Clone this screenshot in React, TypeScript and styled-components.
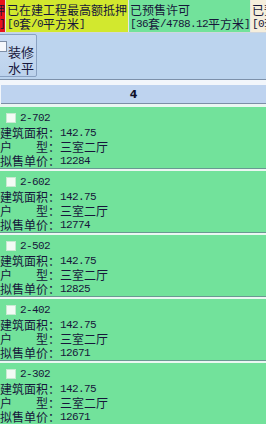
import React from "react";
import styled, { createGlobalStyle } from "styled-components";

const GlobalStyle = createGlobalStyle`
  html, body { margin: 0; padding: 0; }
  body {
    background: #bcd4ee;
    font-family: "Noto Sans CJK SC", "Noto Sans", sans-serif;
    color: #16163a;
    overflow: hidden;
  }
`;

const Page = styled.div`
  width: 266px;
  height: 424px;
  overflow: hidden;
  display: flex;
  flex-direction: column;
`;

const TopBar = styled.div`
  display: flex;
  gap: 1px;
  height: 32px;
  background: #e6e6e6;
  border-bottom: 1px solid #cfd6de;
  overflow: hidden;
  flex: none;
`;

const Segment = styled.div<{ $bg: string; $w?: number; $clip?: boolean }>`
  flex: ${(p) => (p.$w ? `0 0 ${p.$w}px` : "1 1 0")};
  min-width: 0;
  background: ${(p) => p.$bg};
  padding: 3px 0 0 ${(p) => (p.$clip ? 0 : 1)}px;
  box-sizing: border-box;
  white-space: nowrap;
  overflow: hidden;
  display: flex;
  flex-direction: column;
  align-items: ${(p) => (p.$clip ? "flex-end" : "flex-start")};
`;

const TextRow = styled.div`
  height: 14px;
  display: flex;
  align-items: center;
  font-size: 12px;
  line-height: 14px;
  white-space: nowrap;
`;

const Num = styled.span`
  font-family: "Liberation Mono", "DejaVu Sans Mono", monospace;
  font-size: 11px;
  letter-spacing: -0.6px;
  line-height: 14px;
`;

const Toolbar = styled.div`
  height: 46px;
  border-bottom: 1px solid #7d91aa;
  display: flex;
  align-items: flex-start;
  overflow: hidden;
  flex: none;
`;

const ToolButton = styled.div`
  margin-left: -7px;
  margin-top: 1px;
  width: 44px;
  height: 43px;
  box-sizing: border-box;
  border: 1px solid #8aa2c2;
  border-radius: 2px;
  background: linear-gradient(#cadcf2, #bcd2ec);
  padding: 9px 0 0 6px;
  font-size: 13px;
  line-height: 16px;
  display: flex;
  flex-direction: column;
`;

const BtnLine = styled.div`
  display: flex;
  align-items: center;
  height: 16px;
  padding-left: 8px;
  position: relative;
`;

const SmallBox = styled.span`
  position: absolute;
  left: -4px;
  top: -3px;
  width: 9px;
  height: 9px;
  border: 1px solid #7f8fa6;
  background: #f6f8fb;
`;

const HeaderZone = styled.div`
  background: #f2f6fb;
  padding: 5px 0 0 1px;
  flex: none;
`;

const HeaderBar = styled.div`
  height: 18px;
  background: #bed3ef;
  border-bottom: 1px solid #7c8ea6;
  display: flex;
  align-items: center;
  justify-content: center;
  font-family: "DejaVu Sans", sans-serif;
  font-weight: bold;
  font-size: 11px;
  color: #10102a;
`;

const List = styled.div`
  background: #eaf7f2;
  padding-top: 3px;
  display: flex;
  flex-direction: column;
  gap: 2px;
`;

const Card = styled.div`
  background: #72e29b;
  height: 62px;
  box-sizing: border-box;
  border-bottom: 1px solid #6a9892;
  padding-top: 2px;
  flex: none;
  display: flex;
  flex-direction: column;
`;

const CardHead = styled.div`
  height: 17px;
  display: flex;
  align-items: center;
  gap: 4px;
  padding-left: 6px;
`;

const Check = styled.span`
  width: 10px;
  height: 10px;
  background: #f3fbf5;
  border: 1px solid #c8ead2;
  box-sizing: border-box;
`;

function mixed(text: string) {
  const parts = text.match(/[\x00-\x7f]+|[^\x00-\x7f]+/g) || [];
  return parts.map((p, i) =>
    /[\x00-\x7f]/.test(p) ? <Num key={i}>{p}</Num> : <React.Fragment key={i}>{p}</React.Fragment>
  );
}

const units = [
  { no: "2-702", price: "12284" },
  { no: "2-602", price: "12774" },
  { no: "2-502", price: "12825" },
  { no: "2-402", price: "12671" },
  { no: "2-302", price: "12671" },
];

export default function App() {
  return (
    <Page>
      <GlobalStyle />
      <TopBar>
        <Segment $bg="#e8121c" $w={5} $clip>
          <TextRow>押</TextRow>
          <TextRow>{mixed("]")}</TextRow>
        </Segment>
        <Segment $bg="#d2e82e" $w={122}>
          <TextRow>已在建工程最高额抵押</TextRow>
          <TextRow>{mixed("[0套/0平方米]")}</TextRow>
        </Segment>
        <Segment $bg="#72e29b" $w={121}>
          <TextRow>已预售许可</TextRow>
          <TextRow>{mixed("[36套/4788.12平方米]")}</TextRow>
        </Segment>
        <Segment $bg="#f5eedc">
          <TextRow>已预售</TextRow>
          <TextRow>{mixed("[0套]")}</TextRow>
        </Segment>
      </TopBar>
      <Toolbar>
        <ToolButton>
          <BtnLine>
            <SmallBox />
            装修
          </BtnLine>
          <BtnLine>水平</BtnLine>
        </ToolButton>
      </Toolbar>
      <HeaderZone>
        <HeaderBar>4</HeaderBar>
      </HeaderZone>
      <List>
        {units.map((u) => (
          <Card key={u.no}>
            <CardHead>
              <Check />
              <Num>{u.no}</Num>
            </CardHead>
            <TextRow>
              建筑面积：<Num>142.75</Num>
            </TextRow>
            <TextRow>户　　型：三室二厅</TextRow>
            <TextRow>
              拟售单价：<Num>{u.price}</Num>
            </TextRow>
          </Card>
        ))}
      </List>
    </Page>
  );
}
